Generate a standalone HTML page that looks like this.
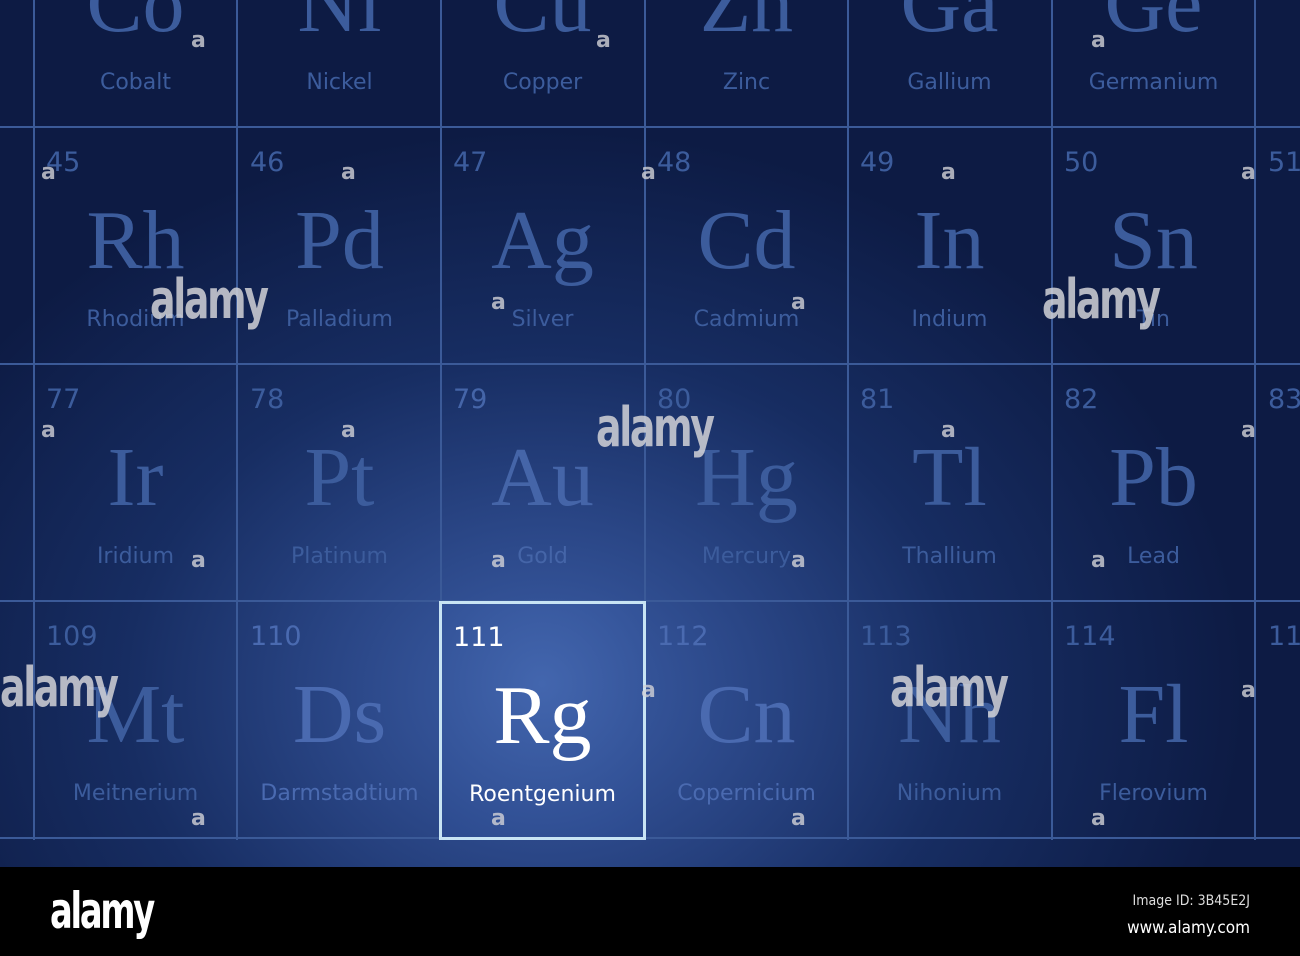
<!DOCTYPE html>
<html><head><meta charset="utf-8"><style>
body{margin:0;width:1300px;height:956px;overflow:hidden;background:#000;position:relative;font-family:"DejaVu Sans","Liberation Sans",sans-serif}
#bg{position:absolute;left:0;top:0;width:1300px;height:867px;background:radial-gradient(ellipse 700px 560px at 545px 690px,#3d5fa8 0%,#2a4686 30%,#172d62 60%,#0d1b44 100%);overflow:hidden}
.c{position:absolute;width:203px;height:237px;box-sizing:border-box;color:#3c5c9c}
.n{position:absolute;left:12px;top:20px;font-size:27px}
.s{position:absolute;left:0;right:0;top:69px;text-align:center;font-family:"Liberation Serif",serif;font-size:84px;line-height:90px}
.m{position:absolute;left:0;right:0;top:180px;text-align:center;font-size:22px}
.vl{position:absolute;top:0;width:2px;height:840px;background:#3b5a98}
.hl{position:absolute;left:0;width:1300px;height:2px;background:#3b5a98}
.w{position:absolute;font-family:"DejaVu Sans Condensed","DejaVu Sans",sans-serif;font-weight:bold;color:rgba(210,210,215,.85);font-size:54px;letter-spacing:-3px;transform:scaleX(.78);transform-origin:left}
.a{position:absolute;font-family:"DejaVu Sans",sans-serif;font-weight:bold;color:rgba(210,210,215,.8);font-size:22px}
</style></head><body>
<div id="bg">
<div class="vl" style="left:33px"></div><div class="vl" style="left:236px"></div><div class="vl" style="left:440px"></div><div class="vl" style="left:644px"></div><div class="vl" style="left:847px"></div><div class="vl" style="left:1051px"></div><div class="vl" style="left:1254px"></div>
<div class="hl" style="top:126px"></div><div class="hl" style="top:363px"></div><div class="hl" style="top:600px"></div><div class="hl" style="top:837px"></div>

<div class="c" style="left:34px;top:-110px"><div class="s">Co</div><div class="m">Cobalt</div></div>
<div class="c" style="left:238px;top:-110px"><div class="s">Ni</div><div class="m">Nickel</div></div>
<div class="c" style="left:441px;top:-110px"><div class="s">Cu</div><div class="m">Copper</div></div>
<div class="c" style="left:645px;top:-110px"><div class="s">Zn</div><div class="m">Zinc</div></div>
<div class="c" style="left:848px;top:-110px"><div class="s">Ga</div><div class="m">Gallium</div></div>
<div class="c" style="left:1052px;top:-110px"><div class="s">Ge</div><div class="m">Germanium</div></div>

<div class="c" style="left:34px;top:127px"><div class="n">45</div><div class="s">Rh</div><div class="m">Rhodium</div></div>
<div class="c" style="left:238px;top:127px"><div class="n">46</div><div class="s">Pd</div><div class="m">Palladium</div></div>
<div class="c" style="left:441px;top:127px"><div class="n">47</div><div class="s">Ag</div><div class="m">Silver</div></div>
<div class="c" style="left:645px;top:127px"><div class="n">48</div><div class="s">Cd</div><div class="m">Cadmium</div></div>
<div class="c" style="left:848px;top:127px"><div class="n">49</div><div class="s">In</div><div class="m">Indium</div></div>
<div class="c" style="left:1052px;top:127px"><div class="n">50</div><div class="s">Sn</div><div class="m">Tin</div></div>
<div class="c" style="left:1256px;top:127px"><div class="n">51</div></div>

<div class="c" style="left:34px;top:364px"><div class="n">77</div><div class="s">Ir</div><div class="m">Iridium</div></div>
<div class="c" style="left:238px;top:364px"><div class="n">78</div><div class="s">Pt</div><div class="m">Platinum</div></div>
<div class="c" style="left:441px;top:364px;color:#4565a8"><div class="n">79</div><div class="s">Au</div><div class="m">Gold</div></div>
<div class="c" style="left:645px;top:364px"><div class="n">80</div><div class="s">Hg</div><div class="m">Mercury</div></div>
<div class="c" style="left:848px;top:364px"><div class="n">81</div><div class="s">Tl</div><div class="m">Thallium</div></div>
<div class="c" style="left:1052px;top:364px"><div class="n">82</div><div class="s">Pb</div><div class="m">Lead</div></div>
<div class="c" style="left:1256px;top:364px"><div class="n">83</div></div>

<div class="c" style="left:34px;top:601px"><div class="n">109</div><div class="s">Mt</div><div class="m">Meitnerium</div></div>
<div class="c" style="left:238px;top:601px;color:#4a6ab0"><div class="n">110</div><div class="s">Ds</div><div class="m">Darmstadtium</div></div>
<div class="c" style="left:645px;top:601px;color:#4a6ab0"><div class="n">112</div><div class="s">Cn</div><div class="m">Copernicium</div></div>
<div class="c" style="left:848px;top:601px"><div class="n">113</div><div class="s">Nh</div><div class="m">Nihonium</div></div>
<div class="c" style="left:1052px;top:601px"><div class="n">114</div><div class="s">Fl</div><div class="m">Flerovium</div></div>
<div class="c" style="left:1256px;top:601px"><div class="n">115</div></div>

<div class="c" style="left:439px;top:601px;width:207px;height:239px;border:3px solid #c8e4f4;color:#fff;background:radial-gradient(circle at 100px 80px,#4366ae,#2c4a8e)"><div class="n" style="left:11px;top:18px">111</div><div class="s" style="top:67px">Rg</div><div class="m" style="top:178px;font-size:22px">Roentgenium</div></div>

<div class="w" style="left:150px;top:268px">alamy</div>
<div class="w" style="left:1042px;top:268px">alamy</div>
<div class="w" style="left:596px;top:396px">alamy</div>
<div class="w" style="left:0px;top:656px">alamy</div>
<div class="w" style="left:890px;top:656px">alamy</div>
<div class="a" style="left:191px;top:28px">a</div><div class="a" style="left:596px;top:28px">a</div><div class="a" style="left:1091px;top:28px">a</div>
<div class="a" style="left:41px;top:160px">a</div><div class="a" style="left:341px;top:160px">a</div><div class="a" style="left:641px;top:160px">a</div><div class="a" style="left:941px;top:160px">a</div><div class="a" style="left:1241px;top:160px">a</div>
<div class="a" style="left:491px;top:290px">a</div><div class="a" style="left:791px;top:290px">a</div>
<div class="a" style="left:41px;top:418px">a</div><div class="a" style="left:341px;top:418px">a</div><div class="a" style="left:941px;top:418px">a</div><div class="a" style="left:1241px;top:418px">a</div>
<div class="a" style="left:191px;top:548px">a</div><div class="a" style="left:491px;top:548px">a</div><div class="a" style="left:791px;top:548px">a</div><div class="a" style="left:1091px;top:548px">a</div>
<div class="a" style="left:641px;top:678px">a</div><div class="a" style="left:1241px;top:678px">a</div>
<div class="a" style="left:191px;top:806px">a</div><div class="a" style="left:491px;top:806px">a</div><div class="a" style="left:791px;top:806px">a</div><div class="a" style="left:1091px;top:806px">a</div>
</div>
<div style="position:absolute;left:50px;top:882px;font-family:'DejaVu Sans Condensed','DejaVu Sans',sans-serif;font-weight:bold;color:#fff;font-size:50px;letter-spacing:-3px;transform:scaleX(.75);transform-origin:left">alamy</div>
<div style="position:absolute;right:50px;top:893px;color:#ddd;font-size:14px;text-align:right;font-family:'DejaVu Sans Condensed',sans-serif">Image ID: 3B45E2J</div>
<div style="position:absolute;right:50px;top:918px;color:#fff;font-size:17px;text-align:right;font-family:'DejaVu Sans Condensed',sans-serif">www.alamy.com</div>
</body></html>
